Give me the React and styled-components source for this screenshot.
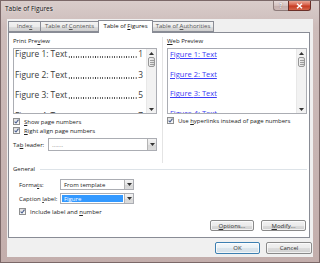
import React from 'react';
import styled, { createGlobalStyle } from 'styled-components';

const GlobalStyle = createGlobalStyle`
  html, body {
    margin: 0;
    padding: 0;
    background: #c4b0ae;
  }
  body {
    font-family: "Open Sans", "Noto Sans", sans-serif;
  }
  * {
    box-sizing: border-box;
  }
`;

const Window = styled.div`
  width: 320px;
  height: 263px;
  display: flex;
  flex-direction: column;
  border: 1px solid #7b6868;
  background: linear-gradient(180deg, #d9cdcb 0%, #cdbcba 10%, #c3aeac 100%);
`;

const TitleBar = styled.div`
  height: 18px;
  display: flex;
  align-items: flex-start;
  padding-left: 4px;
  padding-right: 8px;
`;

const TitleText = styled.div`
  padding-top: 3px;
  line-height: 9px;
  font-size: 6.5px;
  color: #111;
  text-shadow: 0 0 3px rgba(255, 255, 255, 0.9);
`;

const CaptionButtons = styled.div`
  margin-left: auto;
  display: flex;
`;

const HelpButton = styled.div`
  width: 15px;
  height: 10px;
  border: 1px solid #8d7b7a;
  border-top: none;
  border-right: none;
  border-radius: 0 0 0 3px;
  background: linear-gradient(180deg, #e6dad9 0%, #d4c3c1 50%, #c4aeac 51%, #cdb9b7 100%);
  color: #f4f0f0;
  font-size: 7px;
  font-weight: bold;
  line-height: 9px;
  text-align: center;
  text-shadow: 0 0 1px #6a5555;
`;

const CloseButton = styled.div`
  width: 23px;
  height: 10px;
  display: flex;
  align-items: center;
  justify-content: center;
  border: 1px solid #6b2f28;
  border-top: none;
  border-radius: 0 0 3px 0;
  background: linear-gradient(180deg, #e9a795 0%, #d8604a 45%, #c63b22 55%, #d3654b 100%);
`;

const FrameBody = styled.div`
  flex: 1;
  padding: 0 6px 5px 6px;
  display: flex;
`;

const Client = styled.div`
  flex: 1;
  background: #f0f0f0;
  padding: 1px 1px 3px 1px;
  display: flex;
  flex-direction: column;
`;

const TabStrip = styled.div`
  height: 12px;
  display: flex;
  align-items: flex-end;
`;

const Tab = styled.div`
  position: relative;
  width: ${p => p.w}px;
  height: ${p => (p.active ? 13 : 11)}px;
  margin-left: ${p => (p.first ? 0 : -1)}px;
  margin-bottom: ${p => (p.active ? -1 : 0)}px;
  z-index: ${p => (p.active ? 2 : 0)};
  border: 1px solid #898c95;
  border-bottom: ${p => (p.active ? 'none' : '1px solid #898c95')};
  background: ${p => (p.active ? '#fff' : 'linear-gradient(180deg, #f3f3f3 0%, #ebebeb 50%, #dddddd 51%, #cfcfcf 100%)')};
  color: ${p => (p.active ? '#111' : '#555')};
  font-size: 6px;
  line-height: ${p => (p.active ? 11 : 9)}px;
  text-align: center;
  white-space: nowrap;
`;

const Panel = styled.div`
  position: relative;
  z-index: 1;
  height: 206px;
  margin-right: 2px;
  border: 1px solid #898c95;
  background: #fff;
  padding: 4px 2px 0 4px;
  display: flex;
  flex-direction: column;
  font-size: 6px;
  color: #222;
`;

const TopGrid = styled.div`
  height: 126px;
  display: grid;
  grid-template-columns: 144px 1fr;
  column-gap: 5px;
`;

const Column = styled.div`
  display: flex;
  flex-direction: column;
  ${p => p.divided && `
    border-left: 1px solid #e4e4e4;
    padding-left: 4px;
  `}
`;

const SectionLabel = styled.div`
  height: 8px;
  line-height: 8px;
  margin-bottom: 3px;
  white-space: nowrap;
`;

const PreviewBox = styled.div`
  height: 66px;
  border: 1px solid #abadb3;
  display: flex;
  overflow: hidden;
`;

const EntryList = styled.div`
  flex: 1;
  min-width: 0;
  display: flex;
  flex-direction: column;
  gap: ${p => p.gap}px;
  padding: 0 3px 0 ${p => p.pad}px;
  overflow: hidden;
`;

const PrintEntry = styled.div`
  flex: none;
  display: flex;
  align-items: stretch;
  height: 10px;
  line-height: 10px;
  font-size: 8.4px;
  color: #3b3b3b;
  white-space: nowrap;
`;

/* dotted tab leader between caption and page number */
const Leader = styled.span`
  flex: 1;
  min-width: 0;
  margin: 0 1px;
  background-image: radial-gradient(circle, #3b3b3b 0.55px, transparent 0.85px);
  background-size: 2.4px 2px;
  background-repeat: repeat-x;
  background-position: 0 7px;
`;

const WebEntry = styled.div`
  flex: none;
  height: 10px;
  line-height: 10px;
  font-size: 7.5px;
  color: #3c3cf5;
  text-decoration: underline;
  white-space: nowrap;
`;

const Scrollbar = styled.div`
  width: 10px;
  flex: none;
  display: flex;
  flex-direction: column;
  align-items: stretch;
  background: #f2f2f2;
  border-left: 1px solid #e8e8e8;
`;

const ScrollArrow = styled.div`
  height: 8px;
  display: flex;
  align-items: center;
  justify-content: center;
`;

const Thumb = styled.div`
  height: 10px;
  margin: 0 1px;
  border: 1px solid #979797;
  border-radius: 2px;
  background: linear-gradient(90deg, #f1f1f1, #dcdcdc);
  display: flex;
  align-items: center;
  justify-content: center;
`;

const Track = styled.div`
  flex: 1;
`;

const CheckRow = styled.div`
  height: 9px;
  display: flex;
  align-items: center;
  gap: 4px;
  margin-top: ${p => p.mt || 0}px;
  margin-left: ${p => p.indent || 0}px;
  white-space: nowrap;
`;

const Box = styled.div`
  width: 7px;
  height: 7px;
  flex: none;
  border: 1px solid #8e8f8f;
  background: linear-gradient(180deg, #dedede, #fbfbfb);
  display: flex;
  align-items: center;
  justify-content: center;
`;

const FieldRow = styled.div`
  display: flex;
  align-items: center;
  margin-top: ${p => p.mt || 0}px;
  margin-left: ${p => p.indent || 0}px;
  white-space: nowrap;
`;

const FieldLabel = styled.div`
  width: ${p => p.w}px;
  flex: none;
`;

const Select = styled.div`
  width: ${p => p.w}px;
  height: ${p => p.h}px;
  border: 1px solid #abadb3;
  background: #fff;
  display: flex;
  align-items: stretch;
`;

const SelectValue = styled.div`
  flex: 1;
  min-width: 0;
  margin: 1px;
  padding-left: 2px;
  display: flex;
  align-items: center;
  background: ${p => (p.selected ? '#3399ff' : 'transparent')};
  color: ${p => (p.selected ? '#fff' : p.muted ? '#777' : '#222')};
`;

const DropButton = styled.div`
  width: 9px;
  flex: none;
  border-left: 1px solid #b4b4b4;
  background: linear-gradient(180deg, #f3f3f3 0%, #e6e6e6 50%, #d6d6d6 51%, #dcdcdc 100%);
  display: flex;
  align-items: center;
  justify-content: center;
`;

const GroupHeader = styled.div`
  height: 8px;
  margin-top: 2px;
  display: flex;
  align-items: center;
  gap: 5px;
  &::after {
    content: '';
    flex: 1;
    height: 1px;
    background: #dde3e8;
  }
`;

const ButtonRow = styled.div`
  display: flex;
  justify-content: flex-end;
  gap: ${p => p.gap}px;
  margin-top: ${p => p.mt}px;
  margin-right: ${p => p.mr || 0}px;
`;

const Button = styled.div`
  width: ${p => p.w}px;
  height: ${p => p.h}px;
  border: 1px solid ${p => (p.isDefault ? '#3c7fb1' : '#8a8a8a')};
  border-radius: 2px;
  background: ${p =>
    p.isDefault
      ? 'linear-gradient(180deg, #f4f8fb 0%, #e9f0f5 50%, #dbe5ec 51%, #d3dfe8 100%)'
      : 'linear-gradient(180deg, #f2f2f2 0%, #ebebeb 50%, #dddddd 51%, #cfcfcf 100%)'};
  box-shadow: inset 0 0 0 1px rgba(255, 255, 255, 0.7);
  font-size: 6px;
  color: #333;
  display: flex;
  align-items: center;
  justify-content: center;
`;

const U = styled.span`
  text-decoration: underline;
`;

const Check = () => (
  <Box>
    <svg width="5" height="5" viewBox="0 0 5 5">
      <path d="M0.6 2.6 L2 4 L4.5 0.6" fill="none" stroke="#4a5f8f" strokeWidth="1.1" />
    </svg>
  </Box>
);

const Tri = ({ up }) => (
  <svg width="5" height="3" viewBox="0 0 5 3">
    <polygon points={up ? '0,3 5,3 2.5,0' : '0,0 5,0 2.5,3'} fill="#333" />
  </svg>
);

const ScrollBar = () => (
  <Scrollbar>
    <ScrollArrow><Tri up /></ScrollArrow>
    <Thumb>
      <svg width="4" height="5" viewBox="0 0 4 5">
        <path d="M0 0.5 H4 M0 2.5 H4 M0 4.5 H4" stroke="#8a8a8a" strokeWidth="0.8" />
      </svg>
    </Thumb>
    <Track />
    <ScrollArrow><Tri /></ScrollArrow>
  </Scrollbar>
);

const Combo = ({ w, h, children, selected, muted }) => (
  <Select w={w} h={h}>
    <SelectValue selected={selected} muted={muted}>{children}</SelectValue>
    <DropButton><Tri /></DropButton>
  </Select>
);

const entries = [
  { n: 1, page: 1 },
  { n: 2, page: 3 },
  { n: 3, page: 5 },
  { n: 4, page: 7 },
];

export default function App() {
  return (
    <>
      <GlobalStyle />
      <Window>
        <TitleBar>
          <TitleText>Table of Figures</TitleText>
          <CaptionButtons>
            <HelpButton>?</HelpButton>
            <CloseButton>
              <svg width="7" height="6" viewBox="0 0 7 6">
                <path d="M1 0.8 L6 5.2 M6 0.8 L1 5.2" stroke="#fff" strokeWidth="1.5" />
              </svg>
            </CloseButton>
          </CaptionButtons>
        </TitleBar>
        <FrameBody>
          <Client>
            <TabStrip>
              <Tab first w={33}>Inde<U>x</U></Tab>
              <Tab w={59}>Table of <U>C</U>ontents</Tab>
              <Tab active w={55}>Table of <U>F</U>igures</Tab>
              <Tab w={62}>Table of <U>A</U>uthorities</Tab>
            </TabStrip>
            <Panel>
              <TopGrid>
                <Column>
                  <SectionLabel>Print Pre<U>v</U>iew</SectionLabel>
                  <PreviewBox>
                    <EntryList gap={10.5} pad={1}>
                      {entries.map(e => (
                        <PrintEntry key={e.n}>
                          <span>Figure {e.n}: Text</span>
                          <Leader />
                          <span>{e.page}</span>
                        </PrintEntry>
                      ))}
                    </EntryList>
                    <ScrollBar />
                  </PreviewBox>
                  <CheckRow mt={3}>
                    <Check />
                    <span><U>S</U>how page numbers</span>
                  </CheckRow>
                  <CheckRow>
                    <Check />
                    <span><U>R</U>ight align page numbers</span>
                  </CheckRow>
                  <FieldRow mt={3}>
                    <FieldLabel w={35}>Ta<U>b</U> leader:</FieldLabel>
                    <Combo w={109} h={13} muted>.......</Combo>
                  </FieldRow>
                </Column>
                <Column divided>
                  <SectionLabel><U>W</U>eb Preview</SectionLabel>
                  <PreviewBox>
                    <EntryList gap={9.7} pad={2}>
                      {entries.map(e => (
                        <WebEntry key={e.n}>Figure {e.n}: Text</WebEntry>
                      ))}
                    </EntryList>
                    <ScrollBar />
                  </PreviewBox>
                  <CheckRow mt={2}>
                    <Check />
                    <span>Use <U>h</U>yperlinks instead of page numbers</span>
                  </CheckRow>
                </Column>
              </TopGrid>
              <GroupHeader>General</GroupHeader>
              <FieldRow mt={6} indent={6}>
                <FieldLabel w={41}>Forma<U>t</U>s:</FieldLabel>
                <Combo w={74} h={11}>From template</Combo>
              </FieldRow>
              <FieldRow mt={3} indent={6}>
                <FieldLabel w={41}>Caption <U>l</U>abel:</FieldLabel>
                <Combo w={74} h={11} selected>Figure</Combo>
              </FieldRow>
              <CheckRow mt={3} indent={6}>
                <Check />
                <span>Include label and <U>n</U>umber</span>
              </CheckRow>
              <ButtonRow gap={7} mt={4} mr={1}>
                <Button w={44} h={11}><U>O</U>ptions...</Button>
                <Button w={45} h={11}><U>M</U>odify...</Button>
              </ButtonRow>
            </Panel>
            <ButtonRow gap={6} mt={4}>
              <Button w={45} h={12} isDefault>OK</Button>
              <Button w={46} h={12}>Cancel</Button>
            </ButtonRow>
          </Client>
        </FrameBody>
      </Window>
    </>
  );
}
